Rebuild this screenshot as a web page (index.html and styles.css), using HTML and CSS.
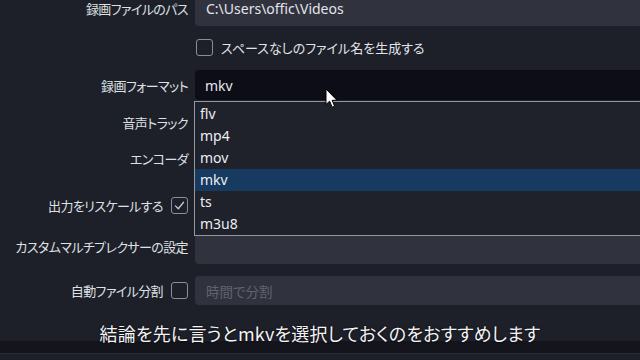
FILE: index.html
```html
<!DOCTYPE html>
<html lang="ja">
<head>
<meta charset="utf-8">
<link rel="stylesheet" href="styles.css">
</head>
<body>
<div class="screen">
  <div class="form">
    <div class="row row-path">
      <div class="label">録画ファイルのパス</div>
      <div class="field field-ro">C:\Users\offic\Videos</div>
    </div>
    <div class="row row-check">
      <div class="label"></div>
      <div class="check-line"><span class="box"></span><span class="check-text">スペースなしのファイル名を生成する</span></div>
    </div>
    <div class="row row-format">
      <div class="label">録画フォーマット</div>
      <div class="field field-combo">mkv</div>
    </div>
    <div class="row row-audio">
      <div class="label">音声トラック</div>
      <div class="field"></div>
    </div>
    <div class="row row-enc">
      <div class="label">エンコーダ</div>
      <div class="field"></div>
    </div>
    <div class="row row-rescale">
      <div class="label"><span>出力をリスケールする</span><span class="box checked"><svg viewBox="0 0 16 16" width="13" height="13"><path d="M3 8.5 L6.5 12 L13 4" fill="none" stroke="#c9cad1" stroke-width="1.6" stroke-linecap="round" stroke-linejoin="round"/></svg></span></div>
      <div class="field"></div>
    </div>
    <div class="row row-custom">
      <div class="label">カスタムマルチプレクサーの設定</div>
      <div class="field field-ro"></div>
    </div>
    <div class="row row-split">
      <div class="label"><span>自動ファイル分割</span><span class="box"></span></div>
      <div class="field field-ro placeholder">時間で分割</div>
    </div>
  </div>

  <div class="popup">
    <div class="item">flv</div>
    <div class="item">mp4</div>
    <div class="item">mov</div>
    <div class="item active">mkv</div>
    <div class="item">ts</div>
    <div class="item">m3u8</div>
  </div>

  <svg class="cursor" width="14" height="21" viewBox="0 0 14 21"><path d="M1 1 L1 16.5 L4.6 13.2 L7.2 19.2 L9.6 18.2 L7.1 12.3 L12 12.3 Z" fill="#ffffff" stroke="#000000" stroke-width="1" stroke-linejoin="round"/></svg>

  <div class="caption">結論を先に言うとmkvを選択しておくのをおすすめします</div>
  <div class="band"></div>
</div>
</body>
</html>
```

FILE: styles.css
```css
html, body {
  margin: 0;
  padding: 0;
  background: #1e2029;
  overflow: hidden;
}
.screen {
  position: relative;
  width: 640px;
  height: 360px;
  overflow: hidden;
  background: #1e2029;
  font-family: "Noto Sans", "Noto Sans CJK JP", sans-serif;
  font-feature-settings: "palt";
  color: #e4e5ea;
  font-size: 14px;
}
.form {
  margin-top: -4px;
  display: flex;
  flex-direction: column;
}
.row {
  display: flex;
  align-items: center;
  gap: 7px;
  margin-right: -40px;
}
.label {
  width: 188px;
  flex: none;
  display: flex;
  justify-content: flex-end;
  align-items: center;
  gap: 8px;
  font-size: 13px;
  letter-spacing: -0.6px;
  color: #dfe0e6;
  white-space: nowrap;
}
.field {
  flex: 1;
  height: 100%;
  border-radius: 4px;
  box-sizing: border-box;
  padding-left: 11px;
  display: flex;
  align-items: center;
  white-space: nowrap;
}
.field-ro { background: #30333e; }
.field-combo { background: #0c0d17; padding-left: 10px; }
.placeholder { color: #60636d; font-size: 13.5px; }

.row-path { height: 30px; }
.row-path .field, .row-path .label { padding-bottom: 5px; box-sizing: border-box; height: 100%; }
.row-check { height: 44px; padding-bottom: 2px; box-sizing: border-box; }
.row-format { height: 30px; }
.row-audio { height: 30px; margin-top: 7px; }
.row-enc { height: 30px; margin-top: 6px; }
.row-rescale { height: 30px; margin-top: 17px; }
.row-custom { height: 31px; margin-top: 13px; }
.row-custom .label { margin-top: -5px; }
.row-split { height: 29px; margin-top: 12px; }

.check-line {
  display: flex;
  align-items: center;
  gap: 8px;
  margin-left: 1px;
}
.check-text { font-size: 13px; color: #e2e3e8; }
.box {
  width: 17px;
  height: 17px;
  box-sizing: border-box;
  border: 1.5px solid #8b8d97;
  border-radius: 3px;
  display: inline-flex;
  align-items: center;
  justify-content: center;
  flex: none;
}

.popup {
  position: absolute;
  left: 194px;
  right: -40px;
  top: 101px;
  height: 135px;
  box-sizing: border-box;
  border: 1px solid #9597a0;
  border-right: 0;
  background: #1f212b;
  padding-top: 1px;
}
.item {
  height: 22px;
  line-height: 22px;
  padding-left: 5px;
  color: #eceef2;
  font-size: 14px;
}
.item.active { background: #163a60; }

.cursor {
  position: absolute;
  left: 325px;
  top: 88px;
}

.caption {
  position: absolute;
  left: 0;
  right: 0;
  top: 320px;
  text-align: center;
  font-family: "Noto Sans CJK JP", sans-serif;
  font-size: 18px;
  color: #f4f4f6;
  letter-spacing: 0.2px;
  text-shadow: 0 0 2px #000;
  z-index: 2;
}
.band {
  position: absolute;
  left: 0;
  right: 0;
  top: 341px;
  height: 12px;
  background: #13141c;
  border-bottom: 1px solid #2a2c35;
}
```
